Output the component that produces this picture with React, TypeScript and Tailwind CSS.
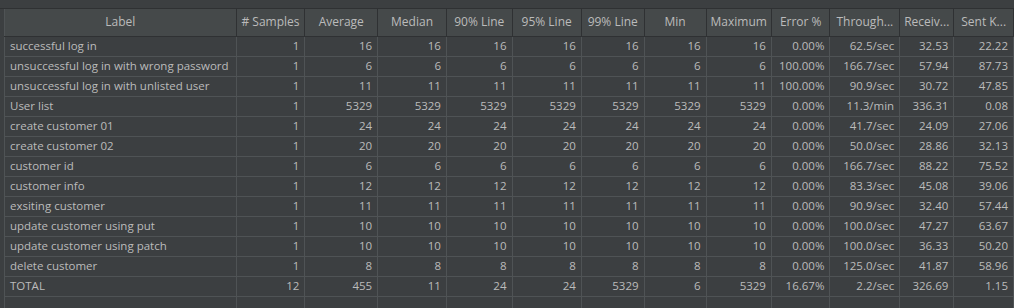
const columns = [
  { label: "Label", width: 232 },
  { label: "# Samples", width: 69 },
  { label: "Average", width: 74 },
  { label: "Median", width: 70 },
  { label: "90% Line", width: 66 },
  { label: "95% Line", width: 70 },
  { label: "99% Line", width: 63 },
  { label: "Min", width: 64 },
  { label: "Maximum", width: 65 },
  { label: "Error %", width: 59 },
  { label: "Through...", width: 70 },
  { label: "Receiv...", width: 54 },
  { label: "Sent K...", width: 60 },
];

const rows: string[][] = [
  ["successful log in", "1", "16", "16", "16", "16", "16", "16", "16", "0.00%", "62.5/sec", "32.53", "22.22"],
  ["unsuccessful log in with wrong password", "1", "6", "6", "6", "6", "6", "6", "6", "100.00%", "166.7/sec", "57.94", "87.73"],
  ["unsuccessful log in with unlisted user", "1", "11", "11", "11", "11", "11", "11", "11", "100.00%", "90.9/sec", "30.72", "47.85"],
  ["User list", "1", "5329", "5329", "5329", "5329", "5329", "5329", "5329", "0.00%", "11.3/min", "336.31", "0.08"],
  ["create customer 01", "1", "24", "24", "24", "24", "24", "24", "24", "0.00%", "41.7/sec", "24.09", "27.06"],
  ["create customer 02", "1", "20", "20", "20", "20", "20", "20", "20", "0.00%", "50.0/sec", "28.86", "32.13"],
  ["customer id", "1", "6", "6", "6", "6", "6", "6", "6", "0.00%", "166.7/sec", "88.22", "75.52"],
  ["customer info", "1", "12", "12", "12", "12", "12", "12", "12", "0.00%", "83.3/sec", "45.08", "39.06"],
  ["exsiting customer", "1", "11", "11", "11", "11", "11", "11", "11", "0.00%", "90.9/sec", "32.40", "57.44"],
  ["update customer using put", "1", "10", "10", "10", "10", "10", "10", "10", "0.00%", "100.0/sec", "47.27", "63.67"],
  ["update customer using patch", "1", "10", "10", "10", "10", "10", "10", "10", "0.00%", "100.0/sec", "36.33", "50.20"],
  ["delete customer", "1", "8", "8", "8", "8", "8", "8", "8", "0.00%", "125.0/sec", "41.87", "58.96"],
  ["TOTAL", "12", "455", "11", "24", "24", "5329", "6", "5329", "16.67%", "2.2/sec", "326.69", "1.15"],
];

const App = () => {
  return (
    <div className="w-[1014px] h-[308px] overflow-hidden bg-[#3c3f41] text-[#bbbbbb] text-[11.5px] font-['Open_Sans',sans-serif]">
      <div className="h-[9px] border-b border-[#2f3133]" />
      <div className="flex h-[298px] pl-[4px]">
        <table className="table-fixed border-collapse border-l border-[#4f5355]">
          <colgroup>
            {columns.map((c) => (
              <col key={c.label} style={{ width: c.width }} />
            ))}
          </colgroup>
          <thead>
            <tr className="h-[27px] bg-[#45494a]">
              {columns.map((c) => (
                <th
                  key={c.label}
                  className="font-normal text-[12px] text-center px-[4px] whitespace-nowrap overflow-hidden border-r border-b border-[#2f3133]"
                >
                  {c.label}
                </th>
              ))}
            </tr>
          </thead>
          <tbody>
            {rows.map((r) => (
              <tr key={r[0]} className="h-[20px]">
                {r.map((v, i) => (
                  <td
                    key={i}
                    className={
                      i === 0
                        ? "text-left pl-[5px] whitespace-nowrap overflow-hidden border-r border-b border-[#4f5355]"
                        : "text-right pr-[5px] whitespace-nowrap overflow-hidden border-r border-b border-[#4f5355]"
                    }
                  >
                    {v}
                  </td>
                ))}
              </tr>
            ))}
            <tr className="h-[20px]">
              {columns.map((c) => (
                <td key={c.label} className="border-r border-[#4f5355]" />
              ))}
            </tr>
          </tbody>
        </table>
      </div>
    </div>
  );
};

export default App;
